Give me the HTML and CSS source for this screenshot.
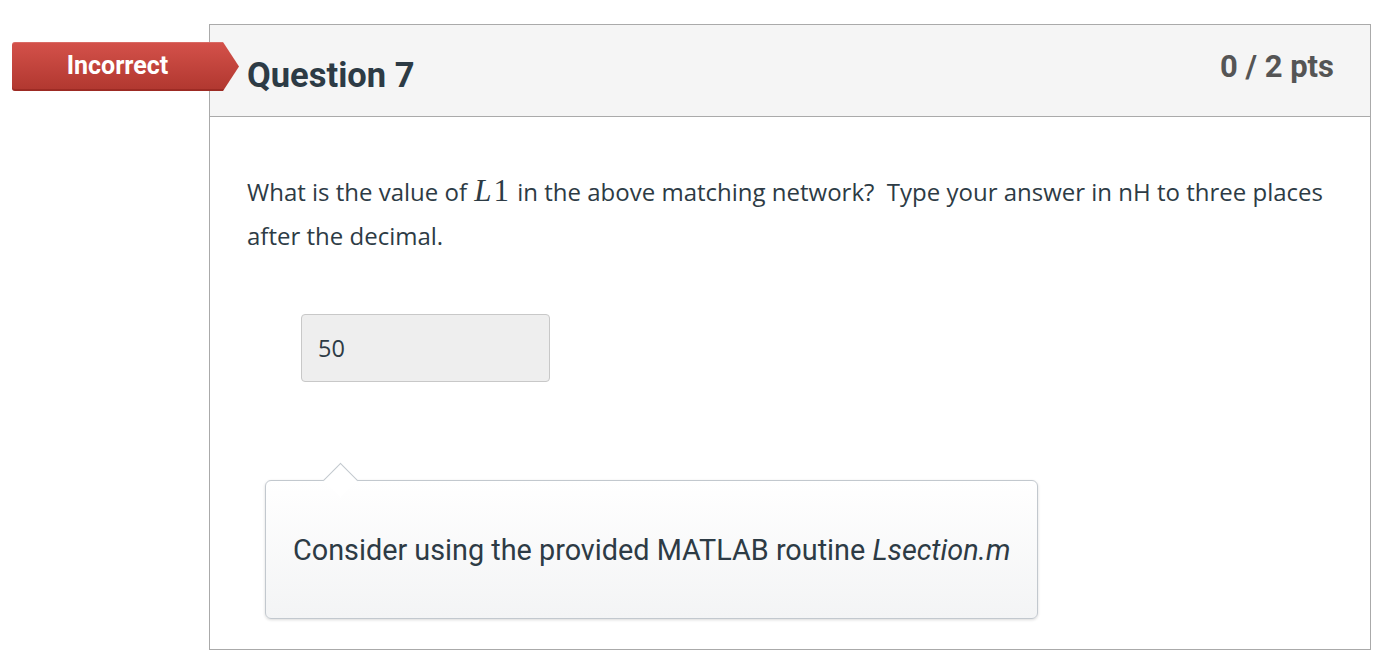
FILE: index.html
```html
<!DOCTYPE html>
<html>
<head>
<meta charset="utf-8">
<link rel="stylesheet" href="styles.css">
</head>
<body>
<div class="page">
  <div class="question">
    <div class="badge"><span>Incorrect</span></div>
    <div class="q-header">
      <h2 class="q-title">Question 7</h2>
      <div class="q-pts">0 / 2 pts</div>
    </div>
    <div class="q-body">
      <p class="q-text">What is the value of <span class="math"><span class="math-it">L</span>1</span> in the above matching network?&nbsp; Type your answer in nH to three places after the decimal.</p>
      <div class="answer">50</div>
      <div class="comment">
        <div class="comment-arrow"></div>
        <p>Consider using the provided MATLAB routine <em>Lsection.m</em></p>
      </div>
    </div>
  </div>
</div>
</body>
</html>
```
FILE: styles.css
```css
html, body {
  margin: 0;
  padding: 0;
  background: #fff;
}
.page {
  padding: 24px 0 0 209px;
  width: 1162px;
}
.question {
  position: relative;
  border: 1px solid #aaaaaa;
  width: 1160px;
}
.badge {
  position: absolute;
  left: -198px;
  top: 17px;
  width: 227px;
  height: 49px;
  background: linear-gradient(#d4514a, #b0372f);
  clip-path: polygon(0 0, 211px 0, 227px 50%, 211px 100%, 0 100%);
  border-radius: 3px;
  box-shadow: inset 0 -2px 0 rgba(120, 20, 15, 0.35), inset 0 1px 0 rgba(255,255,255,0.15);
  display: flex;
  align-items: center;
}
.badge span {
  width: 211px;
  text-align: center;
  color: #fff;
  font-family: Roboto, "Liberation Sans", sans-serif;
  font-weight: 700;
  font-size: 25px;
  margin-top: -3px;
}
.q-header {
  background: #f5f5f5;
  border-bottom: 1px solid #aaaaaa;
  height: 91px;
  display: flex;
  justify-content: space-between;
  align-items: flex-start;
  padding: 0 36px 0 37px;
}
.q-title {
  margin: 0;
  padding-top: 30px;
  font-family: Roboto, "Liberation Sans", sans-serif;
  font-weight: 700;
  font-size: 34.5px;
  line-height: 40px;
  color: #2d3b45;
}
.q-pts {
  padding-top: 22px;
  font-family: Roboto, "Liberation Sans", sans-serif;
  font-weight: 700;
  font-size: 31px;
  line-height: 40px;
  color: #555555;
}
.q-body {
  padding: 53px 40px 30px 37px;
}
.q-text {
  margin: 0;
  font-family: "Open Sans", sans-serif;
  font-size: 24px;
  line-height: 44px;
  color: #2d3b45;
}
.math {
  font-family: "Liberation Serif", serif;
  font-size: 31px;
  line-height: 0;
  margin: 0 2px 0 1px;
}
.math-it {
  font-style: italic;
  margin-right: 2px;
}
.answer {
  margin: 56px 0 0 54px;
  width: 249px;
  height: 68px;
  box-sizing: border-box;
  border: 1px solid #c8c8c8;
  border-radius: 4px;
  background: #eeeeee;
  padding-left: 16px;
  line-height: 66px;
  font-family: "Open Sans", sans-serif;
  font-size: 23.5px;
  color: #2d3b45;
}
.comment {
  position: relative;
  margin: 98px 0 0 18px;
  width: 773px;
  height: 139px;
  box-sizing: border-box;
  border: 1px solid #c2c8ce;
  border-radius: 6px;
  background: linear-gradient(#ffffff, #f3f4f5);
  box-shadow: 0 1px 3px rgba(0,0,0,0.15);
  display: flex;
  align-items: center;
  padding-left: 27px;
}
.comment-arrow {
  position: absolute;
  left: 62px;
  top: -13px;
  width: 24px;
  height: 24px;
  background: #fff;
  border-left: 1px solid #c2c8ce;
  border-top: 1px solid #c2c8ce;
  transform: rotate(45deg);
}
.comment p {
  margin: 0;
  font-family: Roboto, "Liberation Sans", sans-serif;
  font-size: 28.8px;
  color: #2d3b45;
  margin-top: 1px;
}
```
